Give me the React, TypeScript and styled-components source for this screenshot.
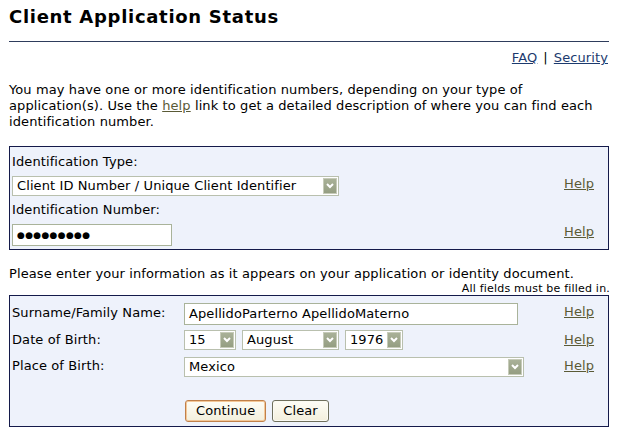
import React from "react";
import styled, { createGlobalStyle } from "styled-components";

const Global = createGlobalStyle`
  html, body { margin: 0; padding: 0; background: #ffffff; }
  body { font-family: "DejaVu Sans", Verdana, sans-serif; font-size: 13px; color: #000; letter-spacing: 0.1px; }
`;

const Page = styled.div`
  width: 600px;
  padding: 0 0 0 9px;
`;

const Title = styled.h1`
  margin: 0;
  padding-top: 6px;
  height: 29px;
  font-size: 18px;
  font-weight: bold;
  line-height: 22px;
  letter-spacing: 0.7px;
`;

const Rule = styled.div`
  height: 1px;
  background: #2e3c5c;
  margin-top: 6px;
`;

const TopLinks = styled.div`
  display: flex;
  justify-content: flex-end;
  align-items: center;
  gap: 6px;
  margin-top: 8px;
  height: 16px;
  line-height: 16px;
  padding-right: 1px;
`;

const NavLink = styled.a`
  color: #1c3a6e;
  text-decoration: underline;
`;

const Intro = styled.p`
  margin: 16px 0 0;
  line-height: 16px;
`;

const HelpLink = styled.a`
  color: #5a5a36;
  text-decoration: underline;
`;

const Panel = styled.div<{ $top: number; $h: number }>`
  margin-top: ${(p) => p.$top}px;
  height: ${(p) => p.$h}px;
  box-sizing: border-box;
  border: 1px solid #141a4a;
  background: #eef2fb;
`;

const IdGrid = styled.div`
  display: grid;
  grid-template-columns: 1fr 44px;
  grid-template-rows: 28px 20px 27px 23px;
  padding: 1px 0 0 2px;
  align-items: center;
`;

const FieldLabel = styled.div`
  line-height: 16px;
`;

const HelpCell = styled.div`
  line-height: 16px;
  margin-top: -5px;
`;

const SelectBox = styled.div<{ $w: number }>`
  width: ${(p) => p.$w}px;
  height: 20px;
  box-sizing: border-box;
  border: 1px solid #b9c0ae;
  background: #ffffff;
  display: flex;
  align-items: center;
  justify-content: space-between;
  padding: 0 1px 0 4px;
  line-height: 16px;
`;

const ArrowBox = styled.span`
  width: 14px;
  height: 16px;
  box-sizing: border-box;
  background: linear-gradient(#a9b198, #959e82);
  border: 1px solid #c6cbb9;
  display: flex;
  align-items: center;
  justify-content: center;
`;

const TextInput = styled.div<{ $w: number }>`
  width: ${(p) => p.$w}px;
  height: 22px;
  box-sizing: border-box;
  border: 1px solid #a9b39a;
  background: #ffffff;
  display: flex;
  align-items: center;
  padding-left: 4px;
  line-height: 16px;
`;

const Dots = styled.span`
  font-size: 9px;
  letter-spacing: 0.3px;
`;

const Note = styled.p`
  margin: 16px 0 0;
  line-height: 16px;
`;

const Required = styled.div`
  text-align: right;
  font-size: 11px;
  line-height: 13px;
  margin-right: -1px;
  letter-spacing: 0.2px;
`;

const InfoGrid = styled.div`
  display: grid;
  grid-template-columns: 172px 1fr 44px;
  grid-template-rows: 27px 27px 27px auto;
  padding: 7px 0 0 2px;
  align-items: start;
`;

const RowLabel = styled.div<{ $pt: number }>`
  line-height: 16px;
  padding-top: ${(p) => p.$pt}px;
`;

const Controls = styled.div`
  display: flex;
  gap: 6px;
  align-items: center;
`;

const HelpRight = styled.div<{ $pt: number }>`
  line-height: 16px;
  padding-top: ${(p) => p.$pt}px;
`;

const Buttons = styled.div`
  grid-column: 2;
  display: flex;
  gap: 6px;
  margin-top: 16px;
  padding-left: 1px;
`;

const Button = styled.button<{ $primary?: boolean }>`
  font-family: "DejaVu Sans", Verdana, sans-serif;
  font-size: 13px;
  letter-spacing: 0.1px;
  height: 22px;
  padding: 0 10px;
  border-radius: 3px;
  border: 1px solid ${(p) => (p.$primary ? "#c0804a" : "#6f6f5c")};
  box-shadow: ${(p) =>
    p.$primary ? "inset 0 0 0 1px #f4c898" : "inset 0 0 0 1px #fbfbf3"};
  background: linear-gradient(#fefdf6, #f3efdc);
  color: #000;
  line-height: 16px;
`;

const Chevron = () => (
  <svg width="10" height="8" viewBox="0 0 10 8">
    <path d="M2 2 L5 5 L8 2" stroke="#ffffff" strokeWidth="2" fill="none" />
  </svg>
);

const Select = ({ w, value }: { w: number; value: string }) => (
  <SelectBox $w={w}>
    <span>{value}</span>
    <ArrowBox>
      <Chevron />
    </ArrowBox>
  </SelectBox>
);

export default function App() {
  return (
    <Page>
      <Global />
      <Title>Client Application Status</Title>
      <Rule />
      <TopLinks>
        <NavLink>FAQ</NavLink>
        <span>|</span>
        <NavLink>Security</NavLink>
      </TopLinks>
      <Intro>
        You may have one or more identification numbers, depending on your type of
        <br />
        application(s). Use the <HelpLink>help</HelpLink> link to get a detailed
        description of where you can find each
        <br />
        identification number.
      </Intro>
      <Panel $top={16} $h={104}>
        <IdGrid>
          <FieldLabel>Identification Type:</FieldLabel>
          <div />
          <Select w={327} value="Client ID Number / Unique Client Identifier" />
          <HelpCell>
            <HelpLink>Help</HelpLink>
          </HelpCell>
          <FieldLabel>Identification Number:</FieldLabel>
          <div />
          <TextInput $w={160}>
            <Dots>●●●●●●●●●</Dots>
          </TextInput>
          <HelpCell>
            <HelpLink>Help</HelpLink>
          </HelpCell>
        </IdGrid>
      </Panel>
      <Note>
        Please enter your information as it appears on your application or identity
        document.
      </Note>
      <Required>All fields must be filled in.</Required>
      <Panel $top={0} $h={132}>
        <InfoGrid>
          <RowLabel $pt={2}>Surname/Family Name:</RowLabel>
          <TextInput $w={334}>ApellidoParterno ApellidoMaterno</TextInput>
          <HelpRight $pt={1}>
            <HelpLink>Help</HelpLink>
          </HelpRight>
          <RowLabel $pt={2}>Date of Birth:</RowLabel>
          <Controls>
            <Select w={52} value="15" />
            <Select w={97} value="August" />
            <Select w={58} value="1976" />
          </Controls>
          <HelpRight $pt={2}>
            <HelpLink>Help</HelpLink>
          </HelpRight>
          <RowLabel $pt={1}>Place of Birth:</RowLabel>
          <Select w={340} value="Mexico" />
          <HelpRight $pt={1}>
            <HelpLink>Help</HelpLink>
          </HelpRight>
          <Buttons>
            <Button $primary>Continue</Button>
            <Button>Clear</Button>
          </Buttons>
        </InfoGrid>
      </Panel>
    </Page>
  );
}
